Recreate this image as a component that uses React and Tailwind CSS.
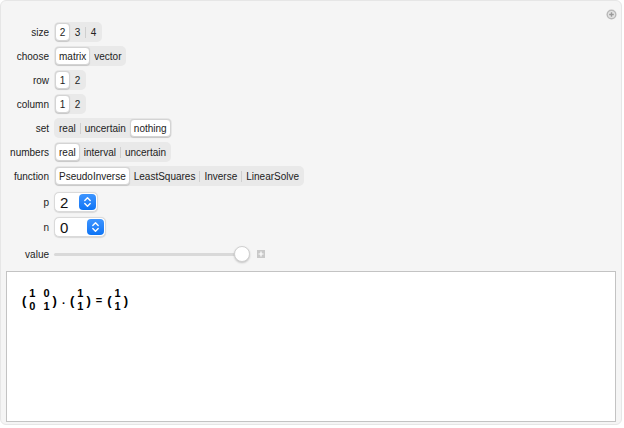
import React from "react";

const font = { fontFamily: '"Liberation Sans", Arial, sans-serif' };

function Segmented({ items, selected }) {
  return (
    <div className="flex h-[20px] items-center rounded-[5px] bg-[#e9e9e9] p-px">
      {items.map((it, i) => {
        const sel = i === selected;
        const nextSel = i + 1 === selected;
        const last = i === items.length - 1;
        return (
          <div key={it} className="flex h-full items-center">
            <div
              className={
                sel
                  ? "flex h-full min-w-[15px] items-center justify-center rounded-[4px] border border-[#d4d4d4] bg-white px-[3px] text-[10px] text-[#222] shadow-[0_0.5px_1px_rgba(0,0,0,0.15)]"
                  : "flex h-full min-w-[15px] items-center justify-center px-[4px] text-[10px] text-[#222]"
              }
            >
              {it}
            </div>
            {!last && !sel && !nextSel ? (
              <div className="h-[11px] w-px bg-[#cfcfcf]" />
            ) : null}
          </div>
        );
      })}
    </div>
  );
}

function Row({ label, h, children }) {
  return (
    <div className={`flex items-center ${h}`}>
      <div className="w-[53px] pr-[5px] text-right text-[10px] text-[#222]">{label}</div>
      {children}
    </div>
  );
}

function Popup({ value, width }) {
  return (
    <div
      className={`flex h-[20px] items-center justify-between rounded-[5px] border border-[#dadada] bg-white pl-[5px] pr-[1px] shadow-[0_0.5px_1px_rgba(0,0,0,0.12)] ${width}`}
    >
      <span className="text-[15px] leading-none text-[#111]">{value}</span>
      <div className="flex h-[16px] w-[17px] items-center justify-center rounded-[4px] bg-gradient-to-b from-[#3d95ff] to-[#0a74f5]">
        <svg width="9" height="12" viewBox="0 0 9 12" fill="none" stroke="white" strokeWidth="1.4" strokeLinecap="round" strokeLinejoin="round">
          <path d="M1.8 4.5 L4.5 1.8 L7.2 4.5" />
          <path d="M1.8 7.5 L4.5 10.2 L7.2 7.5" />
        </svg>
      </div>
    </div>
  );
}

function Paren({ side }) {
  return (
    <span className="text-[13px] font-bold leading-none text-black">{side}</span>
  );
}

function Matrix({ rows }) {
  return (
    <div className="flex items-center">
      <Paren side="(" />
      <div className="flex flex-col px-[3px]">
        {rows.map((r, i) => (
          <div key={i} className="flex gap-[8px] text-[11px] font-bold leading-[13px] text-black">
            {r.map((c, j) => (
              <span key={j}>{c}</span>
            ))}
          </div>
        ))}
      </div>
      <Paren side=")" />
    </div>
  );
}

export default function App() {
  return (
    <div className="h-[428px] w-[624px] bg-white" style={font}>
      <div className="flex h-[425px] w-[622px] flex-col rounded-[6px] border border-[#e6e6e6] bg-[#f5f5f5]">
        <div className="flex h-[19px] justify-end pr-[4px] pt-[8px]">
          <svg width="11" height="11" viewBox="0 0 11 11">
            <circle cx="5.5" cy="5.5" r="5" fill="#b9b9b9" />
            <circle cx="5.5" cy="5.5" r="3.6" fill="#e4e4e4" />
            <path d="M5.5 3.2 V7.8 M3.2 5.5 H7.8" stroke="#9a9a9a" strokeWidth="1.4" />
          </svg>
        </div>
        <div className="flex flex-col">
          <Row label="size" h="h-[24px]">
            <Segmented items={["2", "3", "4"]} selected={0} />
          </Row>
          <Row label="choose" h="h-[24px]">
            <Segmented items={["matrix", "vector"]} selected={0} />
          </Row>
          <Row label="row" h="h-[24px]">
            <Segmented items={["1", "2"]} selected={0} />
          </Row>
          <Row label="column" h="h-[24px]">
            <Segmented items={["1", "2"]} selected={0} />
          </Row>
          <Row label="set" h="h-[24px]">
            <Segmented items={["real", "uncertain", "nothing"]} selected={2} />
          </Row>
          <Row label="numbers" h="h-[24px]">
            <Segmented items={["real", "interval", "uncertain"]} selected={0} />
          </Row>
          <Row label="function" h="h-[24px]">
            <Segmented items={["PseudoInverse", "LeastSquares", "Inverse", "LinearSolve"]} selected={0} />
          </Row>
          <Row label="p" h="h-[28px]">
            <Popup value="2" width="w-[44px]" />
          </Row>
          <Row label="n" h="h-[22px]">
            <Popup value="0" width="w-[52px]" />
          </Row>
          <Row label="value" h="h-[32px]">
            <div className="relative flex h-[20px] w-[196px] items-center">
              <div className="h-[3px] w-[190px] rounded-full bg-[#d9d9d9]" />
              <div className="absolute left-[180px] top-[2px] h-[16px] w-[16px] rounded-full border border-[#d0d0d0] bg-white shadow-[0_1px_2px_rgba(0,0,0,0.2)]" />
            </div>
            <svg className="ml-[7px]" width="8" height="8" viewBox="0 0 8 8">
              <rect width="8" height="8" fill="#c9c9c9" />
              <path d="M4 1.5 V6.5 M1.5 4 H6.5" stroke="white" strokeWidth="1.2" />
            </svg>
          </Row>
        </div>
        <div className="mx-[5px] mt-px h-[151px] border border-[#c3c3c3] bg-white pl-[15px] pt-[15px]">
          <div className="flex items-center gap-[5px]">
            <Matrix rows={[["1", "0"], ["0", "1"]]} />
            <span className="text-[11px] font-bold text-black">.</span>
            <Matrix rows={[["1"], ["1"]]} />
            <span className="text-[11px] font-bold text-black">=</span>
            <Matrix rows={[["1"], ["1"]]} />
          </div>
        </div>
      </div>
    </div>
  );
}
